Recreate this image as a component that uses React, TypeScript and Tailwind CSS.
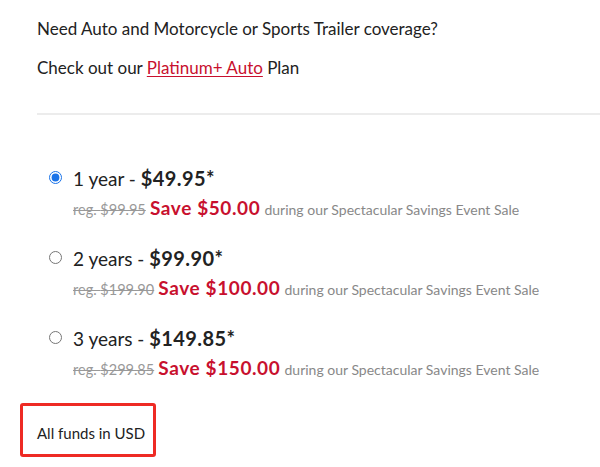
import React from "react";

const options = [
  { label: "1 year", price: "$49.95", reg: "$99.95", save: "$50.00", checked: true },
  { label: "2 years", price: "$99.90", reg: "$199.90", save: "$100.00", checked: false },
  { label: "3 years", price: "$149.85", reg: "$299.85", save: "$150.00", checked: false },
];

export default function App() {
  return (
    <div className="w-[600px] h-[467px] overflow-hidden bg-white text-[#222] font-['Lato',sans-serif]">
      <div className="pl-[37px]">
        <p className="pt-[17px] text-[17px] leading-[24px]">Need Auto and Motorcycle or Sports Trailer coverage?</p>
        <p className="mt-[15px] text-[17px] leading-[24px]">
          Check out our{" "}
          <a href="#" className="text-[#c8102e] underline underline-offset-2">Platinum+ Auto</a> Plan
        </p>
        <div className="mt-[33px] h-[2px] bg-[#ececec]" />
        <div className="mt-[50px] flex flex-col gap-[22px]">
          {options.map((o) => (
            <div key={o.label} className="flex items-start">
              <input
                type="radio"
                name="plan"
                defaultChecked={o.checked}
                className="mt-[6px] ml-[12px] mr-[11px] w-[13px] h-[13px] accent-[#1a73e8]"
              />
              <div>
                <div className="text-[19px] leading-[26px]">
                  {o.label} - <span className="font-bold text-[20px] tracking-[0.4px]">{o.price}*</span>
                </div>
                <div className="mt-[3px] leading-[26px] whitespace-nowrap">
                  <span className="text-[14.5px] text-[#999] line-through">reg. {o.reg}</span>{" "}
                  <span className="text-[19px] font-bold tracking-[0.6px] text-[#c8102e]">Save {o.save}</span>{" "}
                  <span className="text-[14px] text-[#888]">during our Spectacular Savings Event Sale</span>
                </div>
              </div>
            </div>
          ))}
        </div>
      </div>
      <div className="mt-[20px] ml-[20px] w-[136px] h-[54px] border-[3px] border-[#ee2a24] rounded-[3px] flex items-center pl-[14px] pt-[6px]">
        <span className="text-[15px] text-[#222]">All funds in USD</span>
      </div>
    </div>
  );
}
